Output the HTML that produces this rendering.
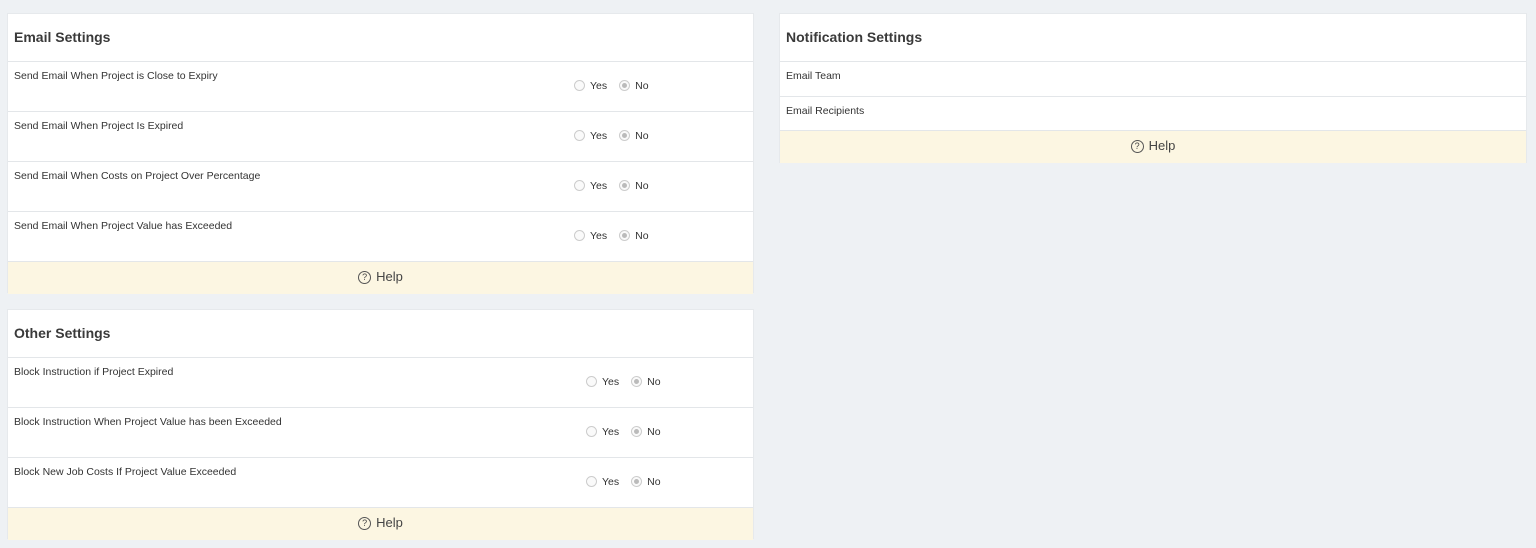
<!DOCTYPE html>
<html><head><style>
*{box-sizing:border-box;margin:0;padding:0}
body{width:1536px;height:548px;background:#eef1f4;font-family:"Liberation Sans",sans-serif;color:#333;position:relative;overflow:hidden}
.p{position:absolute;background:#fff;border:1px solid #e6e9ec}
.h{height:48px;border-bottom:1px solid #e3e6e9;font-size:14px;font-weight:bold;padding:15px 0 0 6px;color:#3a3a3a}
.r{position:relative;height:50px;border-bottom:1px solid #e3e6e9;font-size:10.5px}
.r .l{position:absolute;left:6px;top:8px}
.rd{position:absolute;top:18px;font-size:10.5px}
.c{display:inline-block;width:11px;height:11px;border:1px solid #ccc;border-radius:50%;vertical-align:-2px;margin-right:5px;background:#fafafa;position:relative}
.c.on::after{content:"";position:absolute;left:2px;top:2px;width:5px;height:5px;border-radius:50%;background:#bbb}
.rd span.t{margin-right:12px}
.hp{height:32px;background:#fcf6e2;text-align:center;font-size:13px;color:#444;padding-top:7px}
.q{display:inline-block;width:13px;height:13px;border:1px solid #555;border-radius:50%;font-size:9px;line-height:11px;text-align:center;vertical-align:1px;margin-right:5px}
.s{height:35px;border-bottom:1px solid #e3e6e9;font-size:10.5px;padding:8px 0 0 6px}
</style></head><body>
<div class="p" style="left:7px;top:13px;width:747px;height:280px">
<div class="h">Email Settings</div>
<div class="r"><span class="l">Send Email When Project is Close to Expiry</span><span class="rd" style="left:566px"><span class="c"></span><span class="t">Yes</span><span class="c on"></span>No</span></div>
<div class="r"><span class="l">Send Email When Project Is Expired</span><span class="rd" style="left:566px"><span class="c"></span><span class="t">Yes</span><span class="c on"></span>No</span></div>
<div class="r"><span class="l">Send Email When Costs on Project Over Percentage</span><span class="rd" style="left:566px"><span class="c"></span><span class="t">Yes</span><span class="c on"></span>No</span></div>
<div class="r"><span class="l">Send Email When Project Value has Exceeded</span><span class="rd" style="left:566px"><span class="c"></span><span class="t">Yes</span><span class="c on"></span>No</span></div>
<div class="hp"><span class="q">?</span>Help</div>
</div>
<div class="p" style="left:7px;top:309px;width:747px;height:230px">
<div class="h">Other Settings</div>
<div class="r"><span class="l">Block Instruction if Project Expired</span><span class="rd" style="left:578px"><span class="c"></span><span class="t">Yes</span><span class="c on"></span>No</span></div>
<div class="r"><span class="l">Block Instruction When Project Value has been Exceeded</span><span class="rd" style="left:578px"><span class="c"></span><span class="t">Yes</span><span class="c on"></span>No</span></div>
<div class="r"><span class="l">Block New Job Costs If Project Value Exceeded</span><span class="rd" style="left:578px"><span class="c"></span><span class="t">Yes</span><span class="c on"></span>No</span></div>
<div class="hp"><span class="q">?</span>Help</div>
</div>
<div class="p" style="left:779px;top:13px;width:748px;height:150px">
<div class="h">Notification Settings</div>
<div class="s">Email Team</div>
<div class="s" style="height:34px">Email Recipients</div>
<div class="hp"><span class="q">?</span>Help</div>
</div>
</body></html>
